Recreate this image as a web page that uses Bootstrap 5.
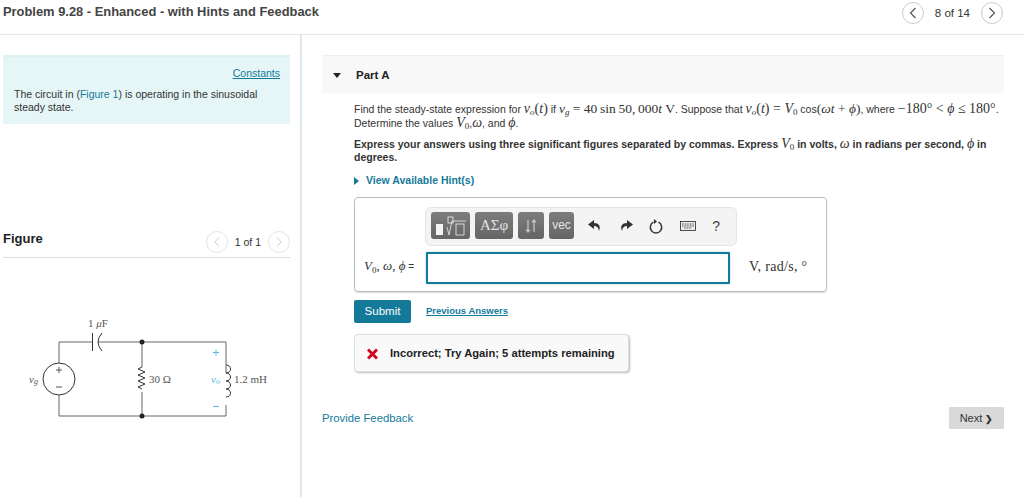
<!DOCTYPE html>
<html lang="en"><head><meta charset="utf-8"><title>Problem 9.28</title>
<link rel="stylesheet" href="https://cdn.jsdelivr.net/npm/bootstrap@5.3.0/dist/css/bootstrap.min.css">
<style>
html,body{height:497px;overflow:hidden}
body{font-family:"Liberation Sans",Arial,sans-serif;font-size:10.5px;line-height:13.500px;color:#333;background:#fff}
a{color:#137a9a}
.m{font-family:"Liberation Serif",serif;font-size:14px;line-height:0}
.m i{font-style:italic}
.m sub{font-size:9px;bottom:-.25em;line-height:0}
.msmall{font-size:13.500px}
.topbar{height:35px;border-bottom:1px solid #e3e6ea;padding:0 21px 0 3px}
.ptitle{font-size:12.900px;font-weight:700;color:#444;margin:0;line-height:16px;padding-top:4px}
.topnav{height:26px}
.roundnav{width:22px;height:22px;border-radius:50%;border:1px solid #ccc;background:#fff;padding:0;display:flex;align-items:center;justify-content:center}
.pager{font-size:11.500px;color:#333;margin:0 11px;padding-top:1px;white-space:nowrap}
.leftcol{width:302px;height:462px;border-right:2px solid #dfe7ef;padding:20px 10px 0 3px;flex:none}
.infobox{height:69px;background:#e6f6f7;border-top:2px solid #dff0f1;padding:10px 10px 0 11px}
.infotext{margin-top:7px}
.figurehead{margin-top:106px;height:28px;border-bottom:1px solid #ddd}
.figname{font-size:13px;font-weight:700;color:#222;line-height:14px;padding-bottom:11px}
.roundnav.dim{border-color:#e4e4e4}
.pager.small-pager{font-size:10.500px;margin:0 7px}
.circ{display:block;margin:0 0 0 -3px}
.rightcol{flex:1;padding:20px 20px 0 20px;min-width:0}
.parthead{height:38px;background:#f8f8f8;border-top:1px solid #efefef;padding:2px 0 0 11px;gap:15px}
.parthead b{font-size:11.500px;color:#222}
.tri{width:0;height:0;border-left:4.500px solid transparent;border-right:4.500px solid transparent;border-top:5px solid #222}
.partbody{padding:10px 0 0 32px}
.partbody p{margin:0;color:#333;white-space:nowrap}
.emph{font-weight:700;margin-top:8px!important;line-height:13px}
.hintline{margin-top:10px;font-weight:700;display:flex;align-items:center;gap:7px;height:14px;color:#137a9a}
.tri2{width:0;height:0;border-top:4.500px solid transparent;border-bottom:4.500px solid transparent;border-left:5px solid #137a9a}
.anspanel{margin-top:9px;width:473px;height:95px;border:1px solid #bbb;border-radius:4px;padding:9px 0 0 9px;box-shadow:0 1px 1px #ddd}
.toolbox{margin-left:61px;width:312px;height:39px;background:#f4f4f4;border:1px solid #e4e4e4;border-radius:6px;padding:4px 0 0 5px;gap:5px}
.tb{height:27px;border-radius:3px;border:0;background:linear-gradient(#7d7d7d,#656565);color:#e4e4e4;padding:0;display:flex;align-items:center;justify-content:center;font-family:"Liberation Serif",serif;font-size:15px}
.tb1{width:39px}.tb2{width:38px}.tb3{width:26px}.tb4{width:25px;font-family:"Liberation Sans",sans-serif;font-size:12px}
.tools{margin-left:9px;width:134px;justify-content:space-between;align-items:center;height:27px}
.qmark{font-size:14px;color:#444;line-height:16px;margin-right:2px}
.ansrow{margin-top:6px}
.anslabel{width:62px;white-space:nowrap;font-size:10px;color:#333;margin-bottom:2px}
.anslabel .m{font-size:13px}
.ansbox{width:304px;height:32px;border:2px solid #137a9a;border-radius:1px;background:#fff;box-shadow:0 0 2px #9cc8d6;padding:0}
.ansunit{margin:0 0 2px 19px;font-size:14px;letter-spacing:.3px;white-space:nowrap;color:#333}
.actions{margin-top:8px;height:23px;gap:15px}
.subbtn{width:57px;height:23px;padding:0;border:0;border-radius:2px;background:#137a9a;color:#fff;font-size:11.500px;line-height:23px}
.prevans{font-size:9.500px;font-weight:700;margin-top:-2px}
.resultbox{margin-top:11px;width:275px;height:38px;background:#f9f9f9;border:1px solid #ddd;border-radius:4px;box-shadow:1px 1px 2px #bbb;padding:1px 0 0 11px;gap:11px;font-size:11.200px;font-weight:700;color:#222}
.footline{margin-top:35px}
.feedlink{font-size:11.300px;text-decoration:none;margin-top:1px}
.nextbtn{width:55px;height:22px;background:#d9d9d9;border:0;border-radius:1px;padding:0;color:#333;font-size:11px;line-height:22px}
.chev{font-size:9px}
</style></head>
<body>
<header class="topbar d-flex justify-content-between">
  <h1 class="ptitle">Problem 9.28 - Enhanced - with Hints and Feedback</h1>
  <nav class="topnav d-flex align-items-center">
    <button class="roundnav" aria-label="Previous"><svg width="8" height="12" viewBox="0 0 8 12"><path d="M6.500 1 1.500 6l5 5" fill="none" stroke="#555" stroke-width="1.2"/></svg></button>
    <span class="pager">8 of 14</span>
    <button class="roundnav" aria-label="Next"><svg width="8" height="12" viewBox="0 0 8 12"><path d="M1.500 1 6.500 6l-5 5" fill="none" stroke="#555" stroke-width="1.2"/></svg></button>
  </nav>
</header>
<div class="d-flex">
  <aside class="leftcol">
    <div class="infobox">
      <div class="text-end"><a href="#">Constants</a></div>
      <div class="infotext">The circuit in (<a href="#" class="text-decoration-none">Figure 1</a>) is operating in the sinusoidal<br>steady state.</div>
    </div>
    <div class="figurehead d-flex justify-content-between align-items-end">
      <div class="figname">Figure</div>
      <nav class="d-flex align-items-center pb-1">
        <button class="roundnav dim" aria-label="Previous"><svg width="8" height="12" viewBox="0 0 8 12"><path d="M6 1.500 2 6l4 4.500" fill="none" stroke="#ccc" stroke-width="1"/></svg></button>
        <span class="pager small-pager">1 of 1</span>
        <button class="roundnav dim" aria-label="Next"><svg width="8" height="12" viewBox="0 0 8 12"><path d="M2 1.500 6 6l-4 4.500" fill="none" stroke="#ccc" stroke-width="1"/></svg></button>
      </nav>
    </div>
    <svg class="circ" width="290" height="170" viewBox="0 0 290 170">
      <g transform="translate(0,-258)" fill="none" stroke="#666" stroke-width="1">
        <path d="M59 363V342H92M98 342H226V373M226 405V416H59V395M142 342V367M142 392V416"/>
        <circle cx="59" cy="379" r="16" stroke="#333"/>
        <path d="M92.500 333V351" stroke="#333"/>
        <path d="M102 333Q94 342 102 351" stroke="#333"/>
        <path d="M142 367l-4 2 7 3-7 3 7 3-7 3 7 3-7 3 4 2" stroke="#333"/>
        <path d="M226 364c6 0 6 8 0 8c6 0 6 8 0 8c6 0 6 8 0 8c6 0 6 8 0 8" stroke="#333" transform="translate(0,1)"/>
        <g stroke="#555"><path d="M56 370h6M59 367v6M56 387h6"/></g>
        <g stroke="#5ab4e6"><path d="M213 352.500h6M216 349.500v6M213 406.500h6"/></g>
        <circle cx="142" cy="342" r="2.500" fill="#222" stroke="none"/>
        <circle cx="142" cy="416" r="2.500" fill="#222" stroke="none"/>
        <g font-family="Liberation Serif" font-size="11" fill="#555" stroke="none">
          <text x="88" y="327">1 <tspan font-style="italic">μ</tspan>F</text>
          <text x="149" y="383">30 Ω</text>
          <text x="234" y="383">1.2 mH</text>
          <text x="29" y="383" font-style="italic">v<tspan font-size="8" dy="1">g</tspan></text>
          <text x="211" y="383" font-style="italic" fill="#5ab4e6">v<tspan font-size="8" dy="1">o</tspan></text>
        </g>
      </g>
    </svg>
  </aside>
  <main class="rightcol">
    <div class="parthead d-flex align-items-center"><span class="tri"></span><b>Part A</b></div>
    <section class="partbody">
      <p>Find the steady-state expression for <span class="m"><i>v</i><sub><i>o</i></sub>(<i>t</i>)</span> if <span class="m msmall"><i>v</i><sub><i>g</i></sub> = 40&thinsp;sin&thinsp;50,&thinsp;000<i>t</i> V</span>. Suppose that <span class="m"><i>v</i><sub><i>o</i></sub>(<i>t</i>) = <i>V</i><sub>0</sub></span> cos<span class="m msmall">(<i>ωt</i> + <i>ϕ</i>)</span>, where <span class="m">−180° &lt; <i>ϕ</i> ≤ 180°</span>.<br>Determine the values <span class="m"><i>V</i><sub>0</sub></span>,<span class="m"><i>ω</i></span>, and <span class="m"><i>ϕ</i></span>.</p>
      <p class="emph">Express your answers using three significant figures separated by commas. Express <span class="m fw-normal"><i>V</i><sub>0</sub></span> in volts, <span class="m fw-normal"><i>ω</i></span> in radians per second, <span class="m fw-normal"><i>ϕ</i></span> in<br>degrees.</p>
      <div class="hintline"><span class="tri2"></span>View Available Hint(s)</div>
      <div class="anspanel">
        <div class="toolbox d-flex">
          <button class="tb tb1" aria-label="Templates"><svg width="34" height="22" viewBox="0 0 34 22" fill="none" stroke="#eee" stroke-width=".8"><rect x="2" y="9" width="7" height="11" fill="#f4f4f4" stroke="none"/><rect x="14" y="2" width="5" height="6"/><path d="M13 12l2 8 3-14h14"/><rect x="22" y="9" width="8" height="11"/></svg></button>
          <button class="tb tb2">ΑΣφ</button>
          <button class="tb tb3" aria-label="Arrows"><svg width="14" height="16" viewBox="0 0 14 16" fill="none" stroke="#ccc" stroke-width="1.2"><path d="M4 2v12M2 11.500 4 14l2-2.500M10 14V2M8 4.500 10 2l2 2.500"/></svg></button>
          <button class="tb tb4">vec</button>
          <div class="tools d-flex">
            <svg width="14" height="12" viewBox="0 0 14 12" fill="#333"><path d="M6 0 0 4.500 6 9V6c3 0 4.500 1.500 5 5 2-5 0-8-5-8z"/></svg>
            <svg width="14" height="12" viewBox="0 0 14 12" fill="#333"><path d="M8 0l6 4.500L8 9V6C5 6 3.500 7.500 3 11 1 6 3 3 8 3z"/></svg>
            <svg width="14" height="16" viewBox="0 0 14 16" fill="none" stroke="#333" stroke-width="1.500"><path d="M4.500 4.200A5.700 5.700 0 1 0 9.500 4.200"/><path d="M5 1l3 2.500L5 6z" fill="#333" stroke="none"/></svg>
            <svg width="16" height="10" viewBox="0 0 16 10" fill="none" stroke="#222" stroke-width=".8"><rect x=".5" y=".5" width="15" height="9" fill="#eee"/><path d="M2 3h12M2 5h12M4 7h8" stroke-dasharray="1 .6"/></svg>
            <span class="qmark">?</span>
          </div>
        </div>
        <div class="ansrow d-flex align-items-center">
          <div class="anslabel"><span class="m"><i>V</i><sub>0</sub>, <i>ω</i>, <i>ϕ</i></span> =</div>
          <input class="ansbox" type="text" aria-label="Answer">
          <div class="ansunit m">V, rad/s, °</div>
        </div>
      </div>
      <div class="actions d-flex align-items-center">
        <button class="btn subbtn">Submit</button>
        <a href="#" class="prevans">Previous Answers</a>
      </div>
      <div class="resultbox d-flex align-items-center">
        <svg width="13" height="12" viewBox="0 0 13 12"><path d="M1 2.500 3 .5 6.500 4 10 .5l2 2L8.500 6 12 9.500l-2 2L6.500 8 3 11.500l-2-2L4.500 6z" fill="#d0021b"/></svg>
        <span>Incorrect; Try Again; 5 attempts remaining</span>
      </div>
    </section>
    <div class="footline d-flex justify-content-between align-items-center">
      <a href="#" class="feedlink">Provide Feedback</a>
      <button class="btn nextbtn">Next <b class="chev">❯</b></button>
    </div>
  </main>
</div>
<script src="https://cdn.jsdelivr.net/npm/bootstrap@5.3.0/dist/js/bootstrap.bundle.min.js"></script>
</body></html>
